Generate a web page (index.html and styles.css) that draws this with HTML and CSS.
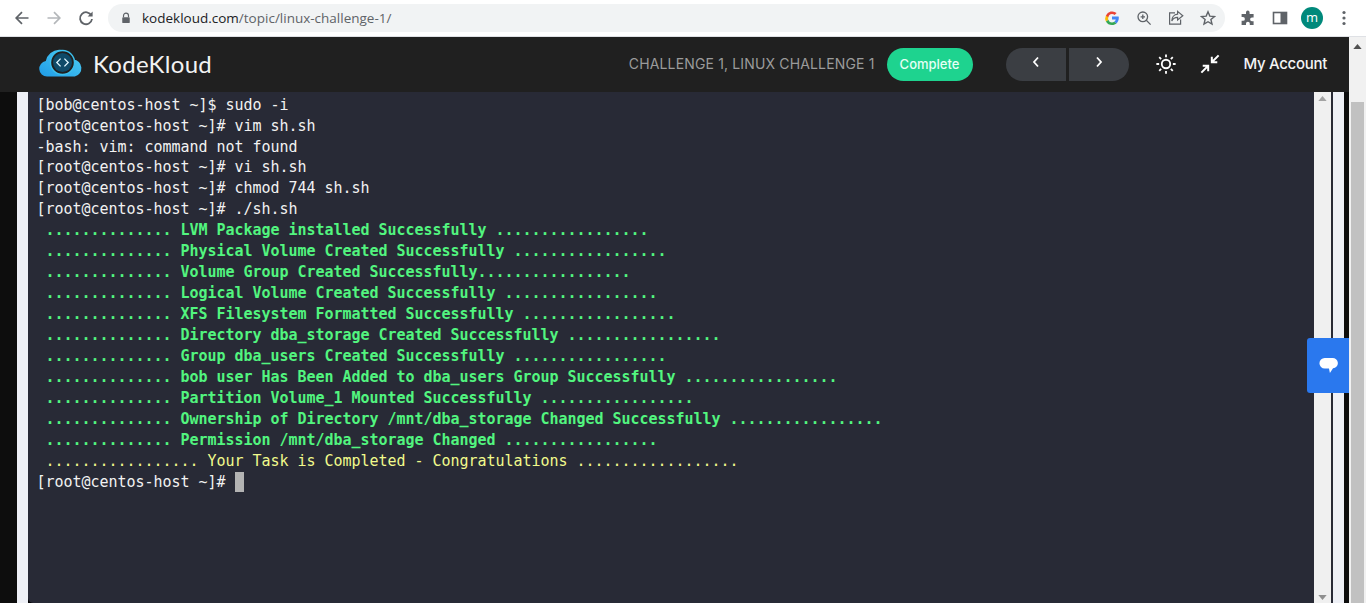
FILE: index.html
```html
<!DOCTYPE html>
<html lang="en">
<head>
<meta charset="utf-8">
<title>Linux Challenge 1</title>
<link rel="stylesheet" href="styles.css">
</head>
<body>
<header class="chrome">
  <svg class="ci nav-first" viewBox="0 0 16 16"><path d="M14.5 8H2.500M8 2.200L2.200 8 8 13.800" fill="none" stroke="#5f6368" stroke-width="1.7"/></svg>
  <svg class="ci" viewBox="0 0 16 16"><path d="M1.500 8H13.500M8 2.200L13.800 8 8 13.800" fill="none" stroke="#b4b7ba" stroke-width="1.7"/></svg>
  <svg class="ci" viewBox="0 0 16 16"><path d="M13.400 5.500A6 6 0 1 0 14 9" fill="none" stroke="#5f6368" stroke-width="1.8"/><path d="M14.600 1.600V6.600H9.600Z" fill="#5f6368"/></svg>
  <div class="omnibox">
    <svg class="lock" viewBox="0 0 12 14"><path d="M3 6V4.200a3 3 0 0 1 6 0V6" fill="none" stroke="#5f6368" stroke-width="1.4"/><rect x="1.500" y="6" width="9" height="7" rx="1" fill="#5f6368"/></svg>
    <span class="url"><b class="host">kodekloud.com</b>/topic/linux-challenge-1/</span>
    <div class="omni-icons">
      <svg class="oi" viewBox="0 0 16 16"><path d="M14.600 6.600H8v2.800h3.800a3.900 3.900 0 0 1-1.600 2.300l2.300 1.800c1.400-1.300 2.300-3.200 2.300-5.400 0-.5 0-1-.2-1.500Z" fill="#4285f4"/><path d="M8 15c1.900 0 3.500-.6 4.500-1.500l-2.300-1.800c-.6.4-1.300.7-2.200.7a3.900 3.900 0 0 1-3.700-2.700L1.900 11.500A7 7 0 0 0 8 15Z" fill="#34a853"/><path d="M4.300 9.700a4.200 4.200 0 0 1 0-2.400V5.500H1.900a7 7 0 0 0 0 6Z" fill="#fbbc05"/><path d="M8 3.900c1 0 1.900.4 2.600 1l2-2A7 7 0 0 0 1.900 5.500l2.400 1.800A3.900 3.900 0 0 1 8 3.900Z" fill="#ea4335"/></svg>
      <svg class="oi" viewBox="0 0 16 16"><g fill="none" stroke="#5f6368" stroke-width="1.3"><circle cx="6.800" cy="6.800" r="4.800"/><path d="M10.300 10.300L14.600 14.600M4.600 6.800H9M6.800 4.600V9"/></g></svg>
      <svg class="oi" viewBox="0 0 16 16"><g fill="none" stroke="#5f6368" stroke-width="1.2"><path d="M7 2.800H1.600v11.400h11V9.600"/><path d="M9.600 1.400L14.800 5.800 9.600 10V7.400C7 7.400 5 8.400 3.800 11 3.800 7.600 6 4.600 9.600 4.200Z"/></g></svg>
      <svg class="oi" viewBox="0 0 16 16"><path d="M8 1.800L9.800 6.100 14.500 6.500 10.900 9.500 12 14.100 8 11.700 4 14.100 5.100 9.500 1.500 6.500 6.200 6.100Z" fill="none" stroke="#5f6368" stroke-width="1.4"/></svg>
    </div>
  </div>
  <svg class="ci puzzle" viewBox="0 0 16 16"><path d="M6 2.400a1.800 1.800 0 0 1 3.600 0V4h4v3.400H12a1.900 1.900 0 0 0 0 3.800h1.600V15H9.800v-1.400a1.900 1.900 0 0 0-3.800 0V15H1.600v-4.200H3a1.900 1.900 0 0 0 0-3.800H1.600V4H6Z" fill="#5f6368"/></svg>
  <svg class="ci panel" viewBox="0 0 16 16"><rect x="1.500" y="2.500" width="13" height="11" fill="none" stroke="#5f6368" stroke-width="1.6"/><rect x="8.500" y="2.500" width="6" height="11" fill="#5f6368"/></svg>
  <span class="avatar">m</span>
  <svg class="ci dots" viewBox="0 0 16 16"><g fill="#5f6368"><circle cx="8" cy="2.500" r="1.600"/><circle cx="8" cy="8" r="1.600"/><circle cx="8" cy="13.500" r="1.600"/></g></svg>
</header>

<div class="viewport">
  <div class="app">
    <nav class="topbar">
      <svg class="logo-mark" viewBox="0 0 46 30">
        <defs><linearGradient id="cloud" x1="0" y1="1" x2="1" y2="0"><stop offset="0" stop-color="#1f9be6"/><stop offset="1" stop-color="#4fd0f5"/></linearGradient></defs>
        <path d="M9 27.500a7.800 7.800 0 0 1-1.200-15.500A14.400 14.400 0 0 1 35.500 10.400 8.700 8.700 0 0 1 36.800 27.500Z" fill="url(#cloud)"/>
        <circle cx="24.500" cy="13.500" r="12" fill="#202020" stroke="#3cc0ee" stroke-width="1.4"/>
        <circle cx="24.500" cy="13.500" r="9.500" fill="#0f4a68"/>
        <path d="M22.600 9.600L18.800 13.500 22.600 17.400M26.400 9.600L30.200 13.500 26.400 17.400" fill="none" stroke="#dff6ff" stroke-width="1.3"/>
      </svg>
      <span class="logo-text">KodeKloud</span>
      <div class="topbar-right">
        <span class="crumb">CHALLENGE 1, LINUX CHALLENGE 1</span>
        <button class="complete">Complete</button>
        <div class="pager">
          <span class="page-btn"><svg class="chev" viewBox="0 0 8 12"><path d="M6 1.500L2 6l4 4.500" fill="none" stroke="#fff" stroke-width="1.8"/></svg></span>
          <span class="page-btn page-next"><svg class="chev" viewBox="0 0 8 12"><path d="M2 1.500L6 6l-4 4.500" fill="none" stroke="#fff" stroke-width="1.8"/></svg></span>
        </div>
        <svg class="sun" viewBox="0 0 24 24"><g stroke="#fff" stroke-width="2" fill="none"><circle cx="12" cy="12" r="4.600"/><path d="M12 1.500V4.500M12 19.500V22.500M1.500 12H4.500M19.500 12H22.500M4.600 4.600L6.700 6.700M17.300 17.300L19.400 19.400M4.600 19.400L6.700 17.300M17.300 6.700L19.400 4.600"/></g></svg>
        <svg class="shrink" viewBox="0 0 22 22"><g stroke="#fff" stroke-width="2.2" fill="none"><path d="M20.500 1.500L13 9M13 3V9H19"/><path d="M1.500 20.500L9 13M3 13H9V19"/></g></svg>
        <span class="account">My Account</span>
      </div>
    </nav>
    <main class="stage">
      <div class="gutter"></div>
      <div class="frame-edge"></div>
      <pre class="terminal"><span>[bob@centos-host ~]$ sudo -i</span>
<span>[root@centos-host ~]# vim sh.sh</span>
<span>-bash: vim: command not found</span>
<span>[root@centos-host ~]# vi sh.sh</span>
<span>[root@centos-host ~]# chmod 744 sh.sh</span>
<span>[root@centos-host ~]# ./sh.sh</span>
<b class="ok"> .............. LVM Package installed Successfully .................</b>
<b class="ok"> .............. Physical Volume Created Successfully .................</b>
<b class="ok"> .............. Volume Group Created Successfully.................</b>
<b class="ok"> .............. Logical Volume Created Successfully .................</b>
<b class="ok"> .............. XFS Filesystem Formatted Successfully .................</b>
<b class="ok"> .............. Directory dba_storage Created Successfully .................</b>
<b class="ok"> .............. Group dba_users Created Successfully .................</b>
<b class="ok"> .............. bob user Has Been Added to dba_users Group Successfully .................</b>
<b class="ok"> .............. Partition Volume_1 Mounted Successfully .................</b>
<b class="ok"> .............. Ownership of Directory /mnt/dba_storage Changed Successfully .................</b>
<b class="ok"> .............. Permission /mnt/dba_storage Changed .................</b>
<span class="done"> ................. Your Task is Completed - Congratulations ..................</span>
<span>[root@centos-host ~]# <i class="cursor"></i></span></pre>
      <div class="inner-scroll">
        <svg class="arrow" viewBox="0 0 10 6"><path d="M5 0L10 6H0Z" fill="#a3a3a3"/></svg>
        <svg class="arrow" viewBox="0 0 10 6"><path d="M0 0H10L5 6Z" fill="#8f8f8f"/></svg>
      </div>
      <div class="rule"></div>
      <div class="frame-edge"></div>
      <div class="black-edge"></div>
      <a class="feedback" href="#" aria-label="Feedback">
        <svg class="bubble" viewBox="0 0 20 18"><path d="M6 1h8a5.500 5.500 0 0 1 .8 11L11.500 17l-1-4.800H6A5.600 5.600 0 0 1 6 1Z" fill="#fff"/></svg>
      </a>
    </main>
  </div>
  <aside class="page-scroll">
    <svg class="page-arrow" viewBox="0 0 10 6"><path d="M5 0L10 6H0Z" fill="#505050"/></svg>
    <div class="thumb"></div>
  </aside>
</div>
</body>
</html>
```
FILE: styles.css
```css
* { box-sizing: border-box; }
html, body { margin: 0; height: 100%; overflow: hidden; }
body { display: flex; flex-direction: column; height: 603px; background: #fff; font-family: "Inter", "Liberation Sans", sans-serif; }

.chrome { flex: none; height: 37px; display: flex; align-items: center; background: #fff; padding: 0 14px 1px 14px; border-bottom: 1px solid #dfe1e5; }
.ci { width: 16px; height: 16px; flex: none; margin-right: 16px; }
.omnibox { flex: none; width: 1117px; height: 28px; margin: 0 15px 0 -2px; border-radius: 14px; background: #f1f3f4; display: flex; align-items: center; padding: 0 9px 0 13px; }
.lock { width: 10px; height: 12px; flex: none; margin-right: 11px; }
.url { font: 13.5px/20px "Open Sans", "Liberation Sans", sans-serif; color: #5f6368; white-space: nowrap; }
.host { font-weight: 400; color: #202124; }
.omni-icons { margin-left: auto; display: flex; gap: 16px; }
.oi { width: 16px; height: 16px; display: block; }
.panel { margin-right: 13px; }
.avatar { flex: none; width: 22px; height: 22px; margin-right: 13px; border-radius: 50%; background: #00897b; color: #fff; font: 13px/21px "Open Sans", sans-serif; text-align: center; }
.dots { margin-right: 0; }

.viewport { flex: 1; min-height: 0; display: flex; background: #000; }
.app { flex: 1; min-width: 0; display: flex; flex-direction: column; }

.topbar { flex: none; height: 55px; background: #202020; display: flex; align-items: center; padding: 0 22px 1px 38px; }
.logo-mark { width: 46px; height: 30px; flex: none; margin-right: 9px; }
.logo-text { font: 400 24px/30px "Lato", "Open Sans", sans-serif; color: #f2f2f2; letter-spacing: .3px; }
.topbar-right { margin-left: auto; display: flex; align-items: center; }
.crumb { font-size: 14px; line-height: 18px; color: #9b9b9b; letter-spacing: .15px; margin-right: 12px; white-space: nowrap; }
.complete { width: 86px; height: 33px; padding: 0; border: 0; border-radius: 17px; background: #1ed38f; color: #e6fff5; font: 500 13px/33px "Inter", sans-serif; margin-right: 33px; }
.pager { display: flex; gap: 3px; width: 123px; height: 33px; margin-right: 26px; }
.page-btn { flex: 1; background: #3b3e43; border-radius: 17px 0 0 17px; display: flex; align-items: center; justify-content: center; padding-bottom: 4px; }
.page-next { border-radius: 0 17px 17px 0; }
.chev { width: 8px; height: 12px; }
.sun { width: 22px; height: 22px; flex: none; margin-right: 23px; }
.shrink { width: 20px; height: 20px; flex: none; margin-right: 24px; }
.account { font-weight: 500; font-size: 15px; line-height: 20px; color: #f4f4f4; letter-spacing: -.3px; white-space: nowrap; }

.stage { flex: 1; min-height: 0; position: relative; display: flex; background: #000; }
.gutter { width: 17px; flex: none; background: #0d0d0d; }
.frame-edge { width: 11px; flex: none; background: #eef0f6; }
.terminal { flex: none; width: 1286px; margin: 0; padding: 2.600px 0 0 8.500px; background: #282a36; color: #f2f2f2; font: 15px/20.950px "DejaVu Sans Mono", monospace; letter-spacing: -.03px; overflow: hidden; border-radius: 0 0 0 5px; }
.ok { font-weight: 700; color: #52f57f; }
.done { color: #f1fa8c; }
.cursor { display: inline-block; width: 9px; height: 20px; background: #b3b3b3; vertical-align: -5px; }
.inner-scroll { width: 17px; flex: none; background: #f0f0f0; display: flex; flex-direction: column; justify-content: space-between; align-items: center; padding: 4px 0 3px; }
.arrow { width: 9px; height: 5px; display: block; }
.rule { width: 2px; flex: none; background: #282a36; }
.black-edge { width: 5px; flex: none; background: #0d0d0d; }
.feedback { position: absolute; right: 0; top: 246px; width: 42px; height: 55px; background: #2a78ee; border-radius: 3px 0 0 3px; display: flex; align-items: center; justify-content: center; }
.bubble { width: 19px; height: 17px; }

.page-scroll { flex: none; width: 17px; background: #f1f1f1; display: flex; flex-direction: column; align-items: center; padding-top: 7px; }
.page-arrow { width: 9px; height: 5px; display: block; }
.thumb { width: 13px; height: 501px; margin-top: 53px; background: #c1c1c1; }
```
